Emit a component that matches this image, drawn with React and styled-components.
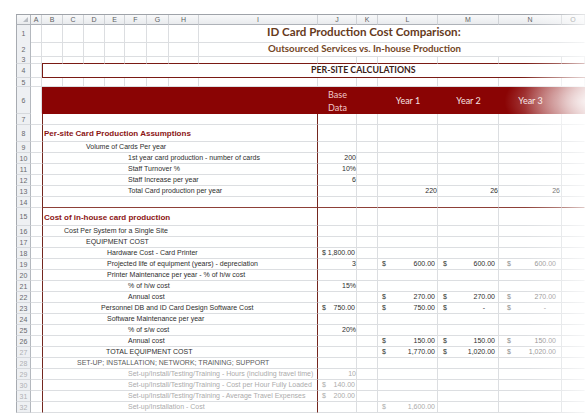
import React from 'react';
import styled, { createGlobalStyle } from 'styled-components';

const GRID = '#dcdee1';
const RULE = '#74271f';
const SECTION_RULE = '#8e4038';
const BAND = '#8a0404';
const BOX = '#7a1a14';
const COLS = '15px 11px 21px 21px 21px 20px 22px 22px 30px 119px 39px 21px 60px 61px 63px 1fr';
const LETTERS = ['A', 'B', 'C', 'D', 'E', 'F', 'G', 'H', 'I', 'J', 'K', 'L', 'M', 'N', 'O'];

const Global = createGlobalStyle`
  html, body { margin: 0; padding: 0; background: #fff; }
  body { font-family: "Liberation Sans", Arial, sans-serif; }
`;

const Page = styled.div`
  position: relative;
  width: 585px;
  height: 414px;
  overflow: hidden;
  box-sizing: border-box;
  padding: 14px 0 0 16px;
  background: #fff;
`;

const Row = styled.div`
  display: grid;
  grid-template-columns: ${COLS};
  height: ${p => p.$h || 11}px;
`;

const HeadRow = styled(Row)`
  box-sizing: border-box;
  border-top: 1px solid #9fa3a9;
  background: linear-gradient(#f8f9fa, #e7e9ec);
`;

const Corner = styled.div`
  position: relative;
  box-sizing: border-box;
  border-left: 1px solid #a7abb1;
  border-right: 1px solid #b2b6bc;
  border-bottom: 1px solid #aeb2b8;
  &::after {
    content: '';
    position: absolute;
    right: 2px;
    bottom: 2px;
    border-style: solid;
    border-width: 0 0 5px 5px;
    border-color: transparent transparent #b9bdc3 transparent;
  }
`;

const ColHead = styled.div`
  box-sizing: border-box;
  border-right: 1px solid #cfd2d6;
  border-bottom: 1px solid #aeb2b8;
  display: flex;
  align-items: center;
  justify-content: center;
  font-size: 7px;
  color: #5d5f63;
`;

const RowNum = styled.div`
  box-sizing: border-box;
  border-left: 1px solid #a7abb1;
  border-right: 1px solid #b4b8be;
  border-bottom: 1px solid #d6d9dd;
  background: #eef0f3;
  display: flex;
  align-items: center;
  justify-content: center;
  font-size: 7px;
  color: ${p => (p.$faint ? '#aeb0b3' : '#67696c')};
`;

const GridCell = styled.div`
  box-sizing: border-box;
  grid-column: span ${p => p.$span || 1};
  border-right: 1px solid ${p => (p.$noV ? 'transparent' : GRID)};
  border-bottom: 1px solid ${p => p.$bottom || GRID};
`;

const TitleCell = styled(GridCell)`
  display: flex;
  align-items: flex-end;
  padding: 0 0 ${p => p.$pb}px ${p => p.$x}px;
  white-space: nowrap;
  font-family: Lato, "Open Sans", sans-serif;
  font-weight: 700;
  font-size: ${p => p.$size}px;
  line-height: ${p => Math.round(p.$size + 2)}px;
  color: ${p => p.$color};
`;

const SectionBox = styled.div`
  box-sizing: border-box;
  grid-column: span 14;
  border-left: 1px solid ${BOX};
  border-bottom: 1px solid ${BOX};
  display: flex;
  align-items: flex-end;
  padding: 0 0 2px 268px;
  white-space: nowrap;
  font-family: Lato, "Open Sans", sans-serif;
  font-weight: 700;
  font-size: 8.8px;
  line-height: 10px;
  color: #3b2117;
`;

const Band = styled.div`
  grid-column: span ${p => p.$span || 1};
  background: ${BAND};
  display: flex;
  flex-direction: column;
  align-items: center;
  justify-content: center;
  font-family: Lato, "Open Sans", sans-serif;
  font-size: 9px;
  line-height: 13px;
  color: ${p => (p.$pink ? '#f1c9c9' : '#f6e2e2')};
`;

const Label = styled.div`
  box-sizing: border-box;
  grid-column: span 8;
  border-left: 1px solid ${RULE};
  border-right: 1px solid ${RULE};
  border-bottom: 1px solid ${p => p.$bottom || GRID};
  display: flex;
  align-items: flex-end;
  padding: 0 0 ${p => (p.$sec ? 2 : 1)}px ${p => p.$x || 0}px;
  white-space: nowrap;
  font-size: ${p => (p.$sec ? 8 : 7)}px;
  line-height: ${p => (p.$sec ? 10 : 8)}px;
  font-weight: ${p => (p.$sec ? 700 : 400)};
  color: ${p => (p.$sec ? '#8b1414' : p.$color)};
`;

const Val = styled.div`
  box-sizing: border-box;
  border-right: 1px solid ${p => (p.$edge ? 'transparent' : GRID)};
  border-bottom: 1px solid ${p => p.$bottom || GRID};
  display: flex;
  align-items: flex-end;
  justify-content: ${p => (p.$acct ? 'space-between' : 'flex-end')};
  padding: 0 ${p => p.$pr || 0}px 1px ${p => p.$pl || 0}px;
  white-space: nowrap;
  font-size: 7px;
  line-height: 8px;
  color: ${p => p.$color};
`;

const Dash = styled.span`
  margin-right: 10px;
`;

const Glare = styled.div`
  position: absolute;
  pointer-events: none;
  left: 470px;
  top: 60px;
  width: 150px;
  height: 90px;
  background: radial-gradient(ellipse 55% 45% at 78% 46%, rgba(255, 255, 255, 0.8) 0%, rgba(255, 255, 255, 0.45) 45%, rgba(255, 255, 255, 0) 100%);
`;

const EdgeFade = styled.div`
  position: absolute;
  pointer-events: none;
  top: 0;
  right: 0;
  width: 60px;
  height: 414px;
  background: linear-gradient(90deg, rgba(255, 255, 255, 0) 0%, rgba(255, 255, 255, 0.3) 55%, rgba(255, 255, 255, 0.72) 100%);
`;

const acct = v => ({ acct: v });

// column config for J, L, M, N: pl = "$" offset, pr = plain right pad, pra = accounting right pad
const VCOLS = {
  j: { pl: 4, pr: 0, pra: 1 },
  l: { pl: 4, pr: 0, pra: 2 },
  m: { pl: 5, pr: 0, pra: 3 },
  n: { pl: 8, pr: 1, pra: 5 },
};

const DATA = [
  { n: 7 },
  { n: 8, h: 17, label: 'Per-site Card Production Assumptions', x: 1, sec: true },
  { n: 9, label: 'Volume of Cards Per year', x: 43 },
  { n: 10, label: '1st year card production  - number of cards', x: 85, j: '200' },
  { n: 11, label: 'Staff Turnover %', x: 85, j: '10%' },
  { n: 12, label: 'Staff Increase per year', x: 85, j: '6' },
  { n: 13, label: 'Total Card production per year', x: 85, l: '220', m: '26', nn: '26' },
  { n: 14, rule: true },
  { n: 15, h: 18, label: 'Cost of in-house card production', x: 1, sec: true },
  { n: 16, label: 'Cost Per System for a Single Site', x: 21 },
  { n: 17, label: 'EQUIPMENT COST', x: 43 },
  { n: 18, label: 'Hardware Cost - Card Printer', x: 64, j: acct('1,800.00') },
  { n: 19, label: 'Projected life of equipment (years) - depreciation', x: 64, j: '3', l: acct('600.00'), m: acct('600.00'), nn: acct('600.00') },
  { n: 20, label: 'Printer Maintenance per year - % of h/w cost', x: 64 },
  { n: 21, label: '% of h/w cost', x: 85, j: '15%' },
  { n: 22, label: 'Annual cost', x: 85, l: acct('270.00'), m: acct('270.00'), nn: acct('270.00') },
  { n: 23, label: 'Personnel DB and ID Card Design Software Cost', x: 58, j: acct('750.00'), l: acct('750.00'), m: acct('-'), nn: acct('-') },
  { n: 24, label: 'Software Maintenance per year', x: 64 },
  { n: 25, label: '% of s/w cost', x: 85, j: '20%' },
  { n: 26, label: 'Annual cost', x: 85, l: acct('150.00'), m: acct('150.00'), nn: acct('150.00') },
  { n: 27, label: 'TOTAL EQUIPMENT COST', x: 63, l: acct('1,770.00'), m: acct('1,020.00'), nn: acct('1,020.00'), faintNum: true },
  { n: 28, label: 'SET-UP; INSTALLATION; NETWORK; TRAINING; SUPPORT', x: 34, fade: 1, faintNum: true },
  { n: 29, label: 'Set-up/Install/Testing/Training - Hours (including travel time)', x: 85, j: '10', fade: 2, faintNum: true },
  { n: 30, label: 'Set-up/Install/Testing/Training - Cost per Hour Fully Loaded', x: 85, j: acct('140.00'), fade: 2, faintNum: true },
  { n: 31, label: 'Set-up/Install/Testing/Training - Average Travel Expenses', x: 85, j: acct('200.00'), fade: 2, faintNum: true },
  { n: 32, label: 'Set-up/Installation - Cost', x: 85, l: acct('1,600.00'), fade: 2, faintNum: true },
];

const TEXT = ['#2e2e2e', '#5b5b5b', '#ababab'];

function Value({ v, col, color, bottom }) {
  const c = VCOLS[col];
  if (v && typeof v === 'object') {
    const isDash = v.acct === '-';
    return (
      <Val $acct $pl={c.pl} $pr={c.pra} $color={color} $bottom={bottom}>
        <span>$</span>
        {isDash ? <Dash>-</Dash> : <span>{v.acct}</span>}
      </Val>
    );
  }
  return (
    <Val $pl={c.pl} $pr={c.pr} $color={color} $bottom={bottom}>
      {v || ''}
    </Val>
  );
}

function DataRow({ r }) {
  const color = TEXT[r.fade || 0];
  const nColor = r.fade ? color : r.n >= 19 ? '#8d8d8d' : '#444';
  const bottom = r.rule ? SECTION_RULE : undefined;
  return (
    <Row $h={r.h}>
      <RowNum $faint={r.faintNum}>{r.n}</RowNum>
      <GridCell $noV />
      <Label $x={r.x} $sec={r.sec} $color={color} $bottom={bottom}>
        {r.label || ''}
      </Label>
      <Value v={r.j} col="j" color={color} bottom={bottom} />
      <GridCell $bottom={bottom} />
      <Value v={r.l} col="l" color={color} bottom={bottom} />
      <Value v={r.m} col="m" color={color} bottom={bottom} />
      <Value v={r.nn} col="n" color={nColor} bottom={bottom} />
      <Val $edge $bottom={bottom} />
    </Row>
  );
}

function PlainCells({ from = 1, to = 15, bottomFrom, bottomColor }) {
  const out = [];
  for (let i = from; i < to; i++) {
    out.push(
      <GridCell key={i} $bottom={bottomFrom !== undefined && i >= bottomFrom ? bottomColor : undefined} />
    );
  }
  return out;
}

export default function App() {
  return (
    <>
      <Global />
      <Page>
        <HeadRow $h={11}>
          <Corner />
          {LETTERS.map(l => (
            <ColHead key={l}>{l}</ColHead>
          ))}
        </HeadRow>

        <Row $h={17}>
          <RowNum>1</RowNum>
          <PlainCells from={1} to={9} />
          <TitleCell $span={7} $noV $x={68} $pb={3} $size={11.6} $color="#663a1c">
            ID Card Production Cost Comparison:
          </TitleCell>
        </Row>

        <Row $h={14}>
          <RowNum>2</RowNum>
          <PlainCells from={1} to={9} />
          <TitleCell $span={7} $noV $x={69} $pb={2} $size={9.7} $color="#74461f">
            Outsourced Services vs. In-house Production
          </TitleCell>
        </Row>

        <Row $h={8}>
          <RowNum>3</RowNum>
          <PlainCells from={1} to={16} bottomFrom={2} bottomColor={BOX} />
        </Row>

        <Row $h={14}>
          <RowNum>4</RowNum>
          <GridCell />
          <SectionBox>PER-SITE CALCULATIONS</SectionBox>
        </Row>

        <Row $h={9}>
          <RowNum>5</RowNum>
          <PlainCells from={1} to={16} />
        </Row>

        <Row $h={27}>
          <RowNum>6</RowNum>
          <GridCell $bottom="transparent" />
          <Band $span={8} />
          <Band $pink>
            <span>Base</span>
            <span>Data</span>
          </Band>
          <Band />
          <Band>Year 1</Band>
          <Band>Year 2</Band>
          <Band>Year 3</Band>
          <Band />
        </Row>

        {DATA.map(r => (
          <DataRow key={r.n} r={r} />
        ))}

        <Glare />
        <EdgeFade />
      </Page>
    </>
  );
}
